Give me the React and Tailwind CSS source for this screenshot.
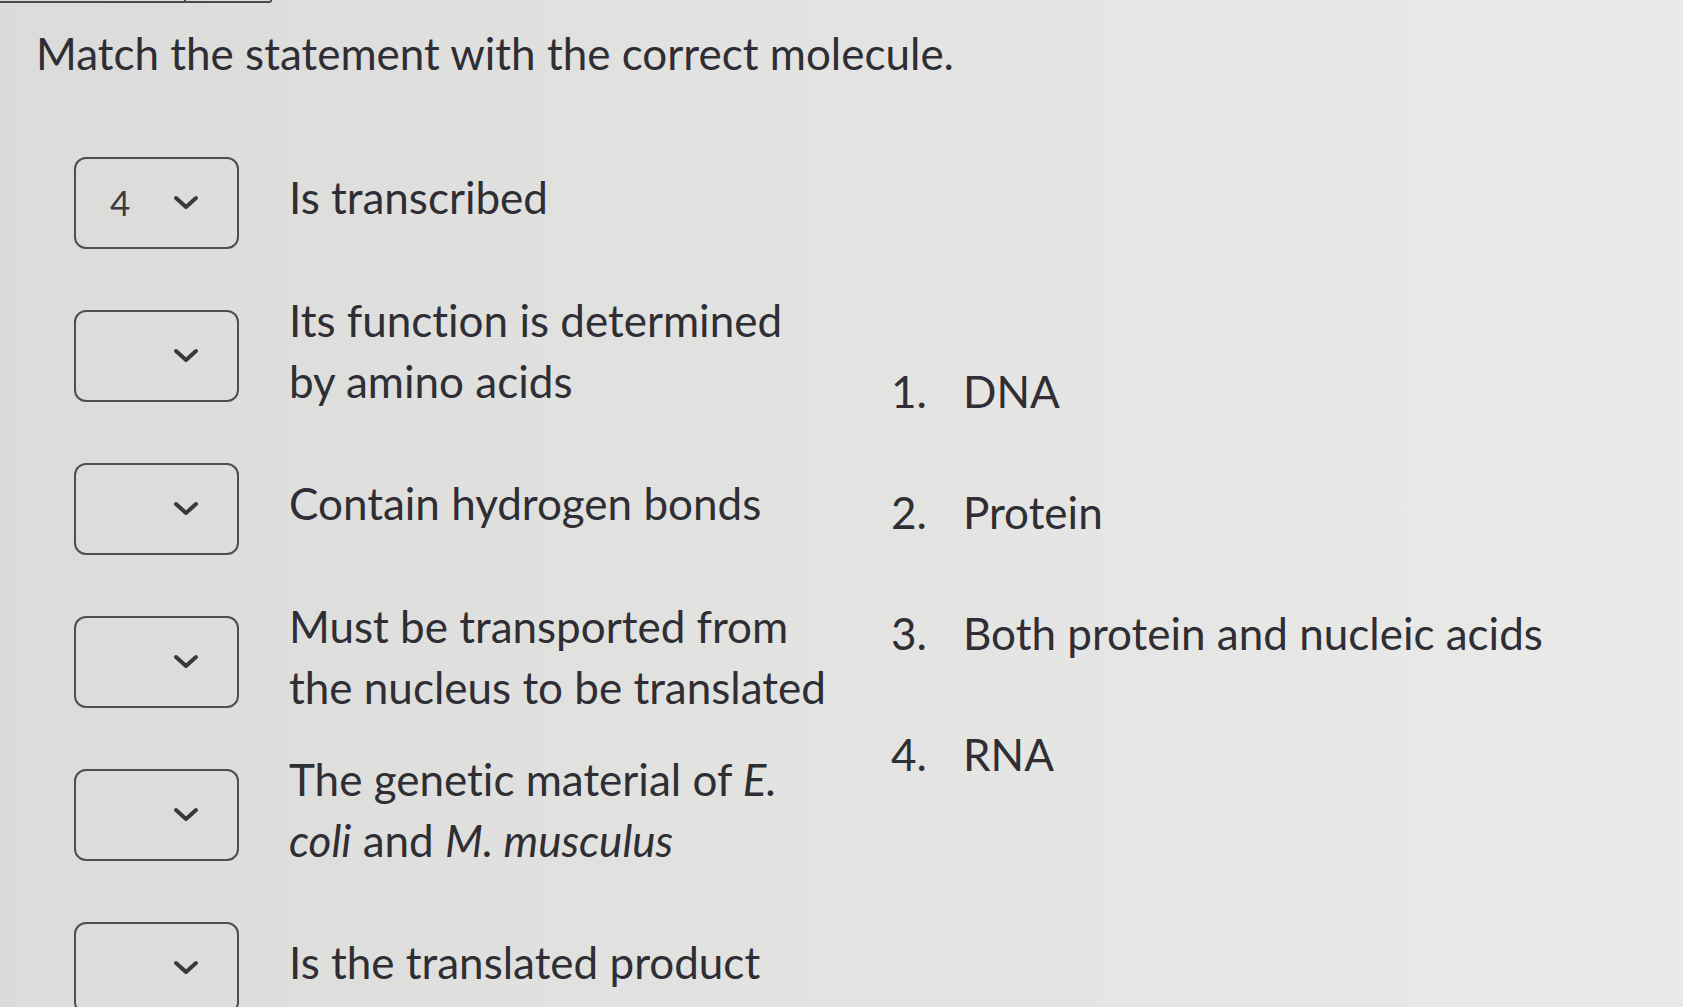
import React from "react";

function Chevron() {
  return (
    <svg width="28" height="17" viewBox="0 0 28 17" fill="none" className="shrink-0">
      <path d="M4 4 L14 13 L24 4" stroke="#38383d" strokeWidth="4" strokeLinecap="round" strokeLinejoin="round" />
    </svg>
  );
}

function Select({ value }) {
  return (
    <div className="flex h-[92px] w-[165px] shrink-0 items-center rounded-[12px] border-2 border-[#4d4d52] pl-[34px] pr-[37px]">
      {value ? <span className="text-[35px] leading-none text-[#3a3a40]">{value}</span> : null}
      <span className="ml-auto">
        <Chevron />
      </span>
    </div>
  );
}

const rows = [
  { value: "4", text: ["Is transcribed"] },
  { value: "", text: ["Its function is determined", "by amino acids"] },
  { value: "", text: ["Contain hydrogen bonds"] },
  { value: "", text: ["Must be transported from", "the nucleus to be translated"] },
  {
    value: "",
    text: [
      <>The genetic material of <i>E.</i></>,
      <><i>coli</i> and <i>M. musculus</i></>,
    ],
  },
  { value: "", text: ["Is the translated product"] },
];

const options = ["DNA", "Protein", "Both protein and nucleic acids", "RNA"];

export default function App() {
  return (
    <div
      className="relative h-[1007px] w-full overflow-hidden bg-gradient-to-r from-[#dbdbda] via-[#e3e3e1] to-[#eaeae8] text-[#2e2e34] [font-variant-ligatures:none]"
      style={{ fontFamily: "Lato, 'Open Sans', sans-serif" }}
    >
      {/* bottom edges of the toolbar tabs above the question */}
      <div className="flex">
        <div className="h-[3px] w-[186px] border-b-2 border-r-2 border-[#4a4a4e]" />
        <div className="h-[3px] w-[86px] rounded-br-[6px] border-b-2 border-r-2 border-[#4a4a4e]" />
      </div>

      <h1 className="mt-[28px] pl-[36px] text-[44px] font-normal leading-none">
        Match the statement with the correct molecule.
      </h1>

      <div className="mt-[51px] flex">
        <div className="flex w-[891px] shrink-0 flex-col pl-[74px]">
          {rows.map((row, i) => (
            <div key={i} className="flex h-[153px] items-center gap-[50px]">
              <Select value={row.value} />
              <div className="whitespace-nowrap pb-[10px] text-[44px] leading-[61px]">
                {row.text.map((line, j) => (
                  <div key={j}>{line}</div>
                ))}
              </div>
            </div>
          ))}
        </div>

        <ol className="flex flex-col pt-[204px] text-[44px]">
          {options.map((opt, i) => (
            <li key={i} className="flex h-[121px] items-center whitespace-nowrap leading-none">
              <span className="w-[72px]">{i + 1}.</span>
              <span>{opt}</span>
            </li>
          ))}
        </ol>
      </div>
    </div>
  );
}
